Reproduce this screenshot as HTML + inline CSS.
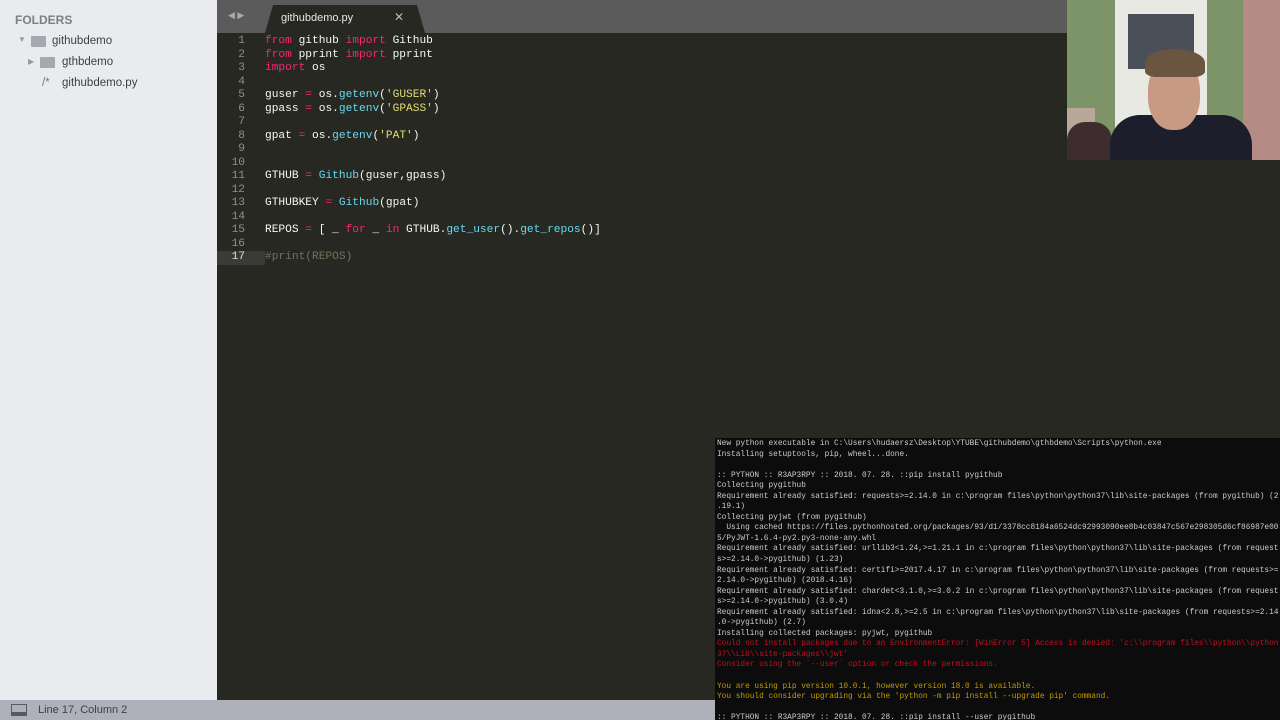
<!DOCTYPE html>
<html><head><meta charset="utf-8"><style>
*{margin:0;padding:0;box-sizing:border-box}
body{width:1280px;height:720px;overflow:hidden;background:#272822;font-family:"Liberation Sans",sans-serif;position:relative}
#side{position:absolute;left:0;top:0;width:217px;height:700px;background:#e9ebee}
#side .h{position:absolute;left:15px;top:13px;font-size:12px;font-weight:bold;color:#7b7f86}
#side .it{position:absolute;font-size:11.5px;color:#3c3f44}
#tabs{position:absolute;left:217px;top:0;width:850px;height:33px;background:#5b5b5b}
#tab{position:absolute;left:48px;top:5px;width:160px;height:28px;background:#272822;clip-path:polygon(8px 0,152px 0,160px 100%,0 100%)}
#tab span{position:absolute;left:16px;top:7px;color:#e6e6e6;font-size:11px}
#tab b{position:absolute;left:129px;top:5px;color:#bbb;font-size:12px;font-weight:normal}
#ed{position:absolute;left:217px;top:33px;width:1060px;height:667px;background:#272822}
.code{position:absolute;left:0;top:2px;width:1000px;font-family:"Liberation Mono",monospace;font-size:11.2px;line-height:13.5px;color:#f8f8f2}
.ln{position:absolute;left:0;top:0;width:28px;text-align:right;color:#8f908a;white-space:pre}
.tx{position:absolute;left:48px;top:0;white-space:pre}
.k{color:#f92672}.f{color:#66d9ef}.s{color:#e6db74}.c{color:#75715e}
#term{position:absolute;left:715px;top:438px;width:565px;height:282px;background:#0c0c0c;font-family:"Liberation Mono",monospace;font-size:7.8px;line-height:10.55px;white-space:pre;color:#cccccc;padding:1px 0 0 2px;overflow:hidden}
.r{color:#c50f1f}.y{color:#c19c00}
#status{position:absolute;left:0;top:700px;width:715px;height:20px;background:#aeb1ba;font-size:11px;color:#3d4048}
#cam{position:absolute;left:1067px;top:0;width:213px;height:160px;background:#7d9468;overflow:hidden}
</style></head><body>
<div id="side">
<div class="h">FOLDERS</div>
<div class="it" style="left:18px;top:35px;color:#999;font-size:8px">▼</div>
<div style="position:absolute;left:31px;top:36px;width:15px;height:11px;background:#a5a8ad;border-radius:1px"></div>
<div class="it" style="left:52px;top:35px">githubdemo</div>
<div class="it" style="left:28px;top:57px;color:#999;font-size:8px">▶</div>
<div style="position:absolute;left:40px;top:57px;width:15px;height:11px;background:#a5a8ad;border-radius:1px"></div>
<div class="it" style="left:62px;top:56px">gthbdemo</div>
<div class="it" style="left:42px;top:77px;color:#777">/*</div>
<div class="it" style="left:62px;top:77px">githubdemo.py</div>
</div>
<div id="tabs">
<div style="position:absolute;left:11px;top:10px;color:#aaa;font-size:9px">◀ ▶</div>
<div id="tab"><span>githubdemo.py</span><b>✕</b></div>
</div>
<div id="ed">
<div style="position:absolute;left:0;top:218px;width:48px;height:14px;background:#3a3a36"></div>
<div class="code"><div class="ln">1
2
3
4
5
6
7
8
9
10
11
12
13
14
15
16
<span style="color:#ddd">17</span></div><div class="tx"><span class="k">from</span> github <span class="k">import</span> Github
<span class="k">from</span> pprint <span class="k">import</span> pprint
<span class="k">import</span> os

guser <span class="k">=</span> os.<span class="f">getenv</span>(<span class="s">'GUSER'</span>)
gpass <span class="k">=</span> os.<span class="f">getenv</span>(<span class="s">'GPASS'</span>)

gpat <span class="k">=</span> os.<span class="f">getenv</span>(<span class="s">'PAT'</span>)


GTHUB <span class="k">=</span> <span class="f">Github</span>(guser,gpass)

GTHUBKEY <span class="k">=</span> <span class="f">Github</span>(gpat)

REPOS <span class="k">=</span> [ _ <span class="k">for</span> _ <span class="k">in</span> GTHUB.<span class="f">get_user</span>().<span class="f">get_repos</span>()]

<span class="c">#print(REPOS)</span></div></div>
</div>
<div id="cam">
<div style="position:absolute;left:48px;top:0;width:92px;height:135px;background:#e9e9e4"></div>
<div style="position:absolute;left:61px;top:14px;width:66px;height:55px;background:#4a5058"></div>
<div style="position:absolute;left:176px;top:0;width:37px;height:160px;background:#b58b86"></div>
<div style="position:absolute;left:0;top:108px;width:28px;height:30px;background:#b9a79a"></div>
<div style="position:absolute;left:0;top:122px;width:45px;height:38px;background:#3e2d2e;border-radius:18px 18px 0 0"></div>
<div style="position:absolute;left:43px;top:115px;width:142px;height:45px;background:#1c1e2c;border-radius:30px 30px 0 0"></div>
<div style="position:absolute;left:81px;top:58px;width:52px;height:72px;background:#c79a84;border-radius:45%"></div>
<div style="position:absolute;left:78px;top:49px;width:60px;height:28px;background:#6a5640;border-radius:50% 50% 20% 20%"></div>
</div>
<div id="term">New python executable in C:\Users\hudaersz\Desktop\YTUBE\githubdemo\gthbdemo\Scripts\python.exe
Installing setuptools, pip, wheel...done.

:: PYTHON :: R3AP3RPY :: 2018. 07. 28. ::pip install pygithub
Collecting pygithub
Requirement already satisfied: requests>=2.14.0 in c:\program files\python\python37\lib\site-packages (from pygithub) (2
.19.1)
Collecting pyjwt (from pygithub)
  Using cached https://files.pythonhosted.org/packages/93/d1/3378cc8184a6524dc92993090ee8b4c03847c567e298305d6cf86987e00
5/PyJWT-1.6.4-py2.py3-none-any.whl
Requirement already satisfied: urllib3&lt;1.24,&gt;=1.21.1 in c:\program files\python\python37\lib\site-packages (from request
s&gt;=2.14.0-&gt;pygithub) (1.23)
Requirement already satisfied: certifi&gt;=2017.4.17 in c:\program files\python\python37\lib\site-packages (from requests&gt;=
2.14.0-&gt;pygithub) (2018.4.16)
Requirement already satisfied: chardet&lt;3.1.0,&gt;=3.0.2 in c:\program files\python\python37\lib\site-packages (from request
s&gt;=2.14.0-&gt;pygithub) (3.0.4)
Requirement already satisfied: idna&lt;2.8,&gt;=2.5 in c:\program files\python\python37\lib\site-packages (from requests&gt;=2.14
.0-&gt;pygithub) (2.7)
Installing collected packages: pyjwt, pygithub
<span class="r">Could not install packages due to an EnvironmentError: [WinError 5] Access is denied: 'c:\\program files\\python\\python
37\\Lib\\site-packages\\jwt'
Consider using the `--user` option or check the permissions.</span>

<span class="y">You are using pip version 10.0.1, however version 18.0 is available.
You should consider upgrading via the 'python -m pip install --upgrade pip' command.</span>

:: PYTHON :: R3AP3RPY :: 2018. 07. 28. ::pip install --user pygithub</div>
<div id="status">
<div style="position:absolute;left:11px;top:4px;width:16px;height:12px;border:1.5px solid #555a63;border-bottom-width:4px"></div>
<div style="position:absolute;left:38px;top:4px">Line 17, Column 2</div>
</div>
</body></html>
